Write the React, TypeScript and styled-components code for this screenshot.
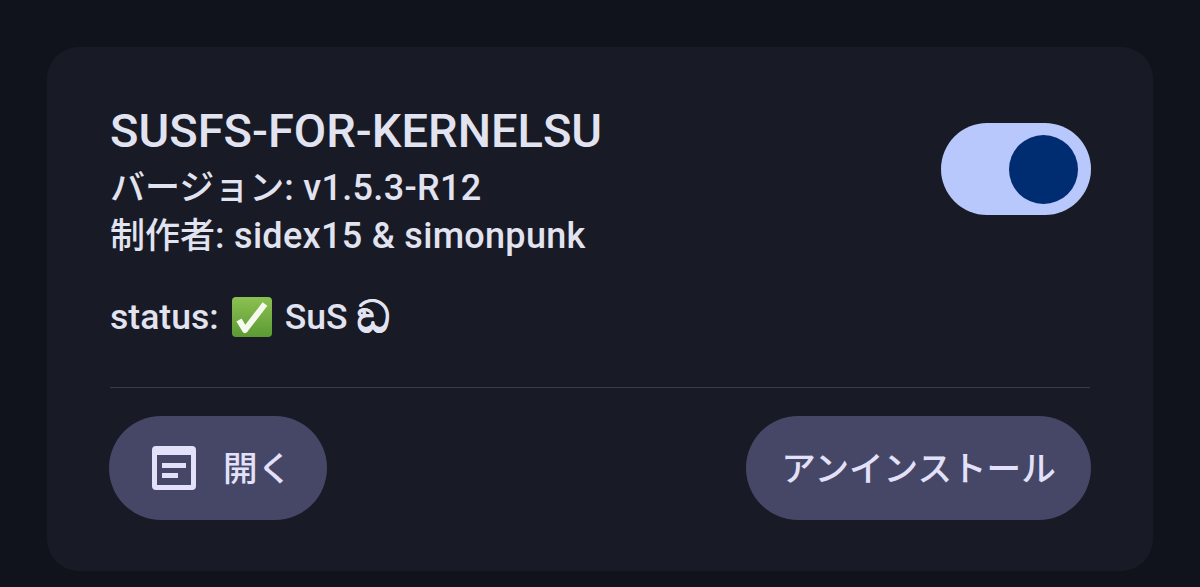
import React from "react";
import styled, { createGlobalStyle } from "styled-components";

const Global = createGlobalStyle`
  html, body { margin: 0; padding: 0; background: #10131c; }
  body { font-family: Roboto, "Noto Sans CJK JP", sans-serif; }
`;

const Page = styled.div`
  width: 1200px;
  height: 587px;
  box-sizing: border-box;
  padding: 47px 47px 16px;
  background: #10131c;
  overflow: hidden;
`;

const Card = styled.section`
  height: 524px;
  box-sizing: border-box;
  padding: 58px 63px 0;
  border-radius: 32px;
  background: #181a25;
  color: #e2e3f0;
  display: flex;
  flex-direction: column;
`;

const Header = styled.header`
  display: flex;
  justify-content: space-between;
  align-items: flex-start;
`;

const Info = styled.div`
  display: flex;
  flex-direction: column;
`;

const Title = styled.h1`
  margin: 0 0 7px;
  font-size: 47px;
  line-height: 52px;
  font-weight: 500;
`;

const Meta = styled.div`
  height: 48px;
  font-size: 36px;
  line-height: 48px;
  font-weight: 500;
  letter-spacing: 0.3px;
`;

const Kana = styled.span`
  font-size: 35px;
  letter-spacing: 0;
`;

const Status = styled.div`
  margin-top: 33px;
  height: 48px;
  display: flex;
  align-items: center;
  font-size: 35.6px;
  font-weight: 500;
`;

const Emoji = styled.svg`
  width: 40px;
  height: 40px;
  margin: 0 13px 0 13px;
`;

const Glyph = styled.span`
  margin-left: 9px;
  font-size: 44px;
  line-height: 48px;
  font-weight: 700;
  -webkit-text-stroke: 0.8px currentColor;
`;

const SwitchTrack = styled.div`
  margin: 18px -1px 0 0;
  width: 150px;
  height: 92px;
  border-radius: 46px;
  background: #b8c8fd;
  display: flex;
  align-items: center;
  justify-content: flex-end;
  padding-right: 13px;
  box-sizing: border-box;
`;

const Thumb = styled.div`
  width: 69px;
  height: 69px;
  border-radius: 50%;
  background: #002c72;
`;

const Divider = styled.hr`
  flex: none;
  margin: 46px 0 28px;
  border: 0;
  height: 1px;
  background: #3a3c47;
`;

const Actions = styled.div`
  display: flex;
  justify-content: space-between;
  margin: 0 -1px;
`;

const Button = styled.button<{ $width: number; $hasIcon?: boolean }>`
  width: ${(p) => p.$width}px;
  height: 104px;
  border: 0;
  border-radius: 52px;
  background: #464766;
  color: #e3e1f9;
  font-family: Roboto, "Noto Sans CJK JP", sans-serif;
  font-size: 34.6px;
  font-weight: 500;
  display: flex;
  align-items: center;
  justify-content: ${(p) => (p.$hasIcon ? "flex-start" : "center")};
  gap: 27px;
  padding: ${(p) => (p.$hasIcon ? "0 0 4px 43px" : "0 0 4px")};
`;

const ButtonIcon = styled.svg`
  width: 44px;
  height: 44px;
  margin-top: 4px;
`;

export default function App() {
  return (
    <>
      <Global />
      <Page>
        <Card>
          <Header>
            <Info>
              <Title>SUSFS-FOR-KERNELSU</Title>
              <Meta>
                <Kana>バージョン</Kana>: v1.5.3-R12
              </Meta>
              <Meta>
                <Kana>制作者</Kana>: sidex15 &amp; simonpunk
              </Meta>
              <Status>
                status:
                <Emoji viewBox="0 0 40 40">
                  <defs>
                    <linearGradient id="emojiGreen" x1="0" y1="0" x2="0" y2="1">
                      <stop offset="0" stopColor="#8cc152" />
                      <stop offset="1" stopColor="#5c9a34" />
                    </linearGradient>
                  </defs>
                  <rect x="0" y="0" width="40" height="40" rx="4" fill="url(#emojiGreen)" />
                  <path d="M7 23l6 10L33 7" fill="none" stroke="#f6f9ee" strokeWidth="6" strokeLinejoin="round" />
                </Emoji>
                SuS
                <Glyph>ඞ</Glyph>
              </Status>
            </Info>
            <SwitchTrack>
              <Thumb />
            </SwitchTrack>
          </Header>
          <Divider />
          <Actions>
            <Button $width={218} $hasIcon>
              <ButtonIcon viewBox="0 0 44 44">
                <path
                  fill="#e3e1f9"
                  fillRule="evenodd"
                  d="M4 0h36a4 4 0 0 1 4 4v36a4 4 0 0 1-4 4H4a4 4 0 0 1-4-4V4a4 4 0 0 1 4-4zM5 9v30h34V9zM10 17h24v5H10zM10 27h16v5H10z"
                />
              </ButtonIcon>
              開く
            </Button>
            <Button $width={345}>アンインストール</Button>
          </Actions>
        </Card>
      </Page>
    </>
  );
}
